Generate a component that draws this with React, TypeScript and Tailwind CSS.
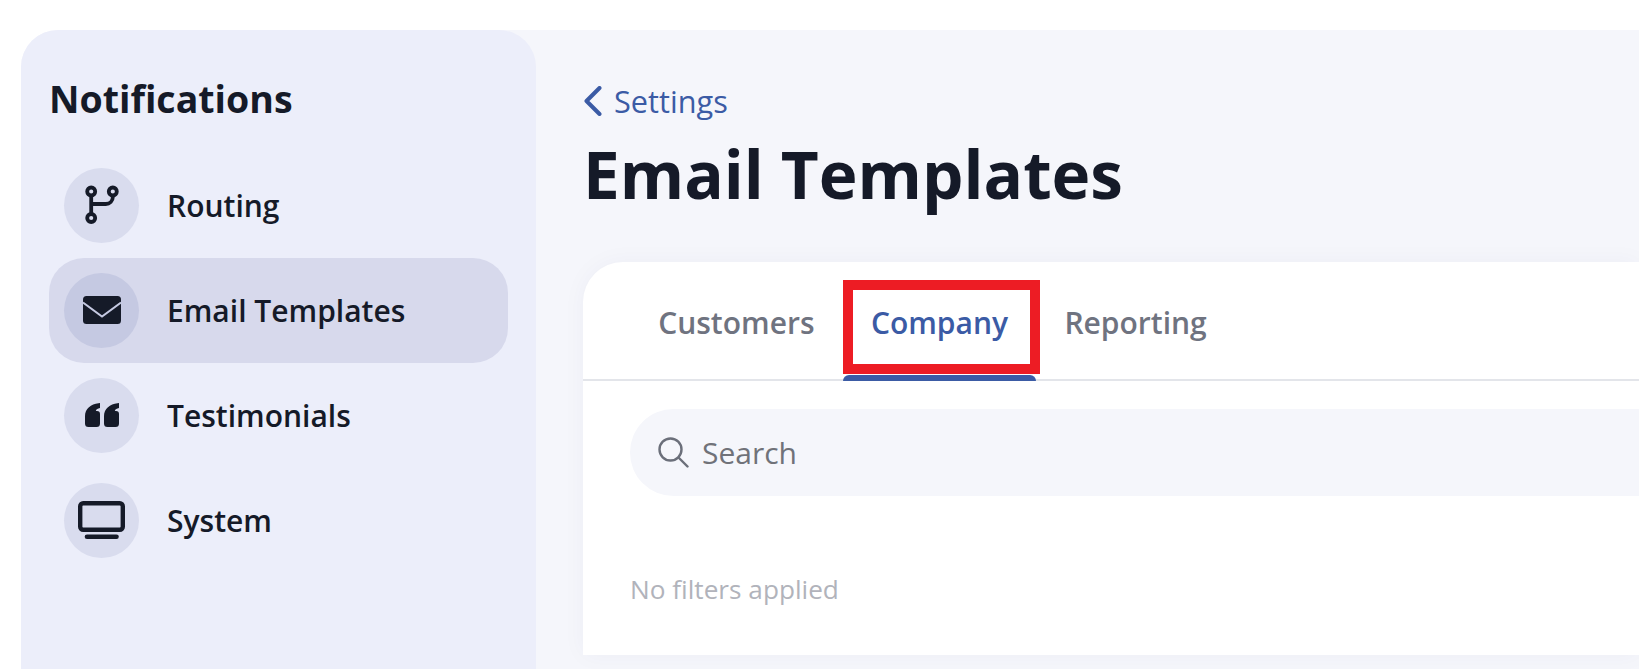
function RoutingIcon() {
  return (
    <svg className="-translate-y-px" width="40" height="40" viewBox="0 0 40 40" fill="none" stroke="#151a28" strokeWidth="3.8">
      <circle cx="9.2" cy="6.5" r="4" />
      <circle cx="30.8" cy="6.5" r="4" />
      <circle cx="9.2" cy="33" r="4" />
      <path d="M9.2 10.5V29" />
      <path d="M30.8 10.5V12c0 4-3 7-7 7H9.2" />
    </svg>
  );
}

function MailIcon() {
  return (
    <svg className="-translate-y-px" width="38" height="28" viewBox="0 0 38 28">
      <rect width="38" height="28" rx="3.5" fill="#151a28" />
      <path d="M0 6.5 19 20.5 38 6.5" fill="none" stroke="#c5c9e2" strokeWidth="2" />
    </svg>
  );
}

function QuoteIcon() {
  const mark =
    'M15 0V5C12.8 5.4 11.3 6.3 10.8 8H12A3 3 0 0 1 15 11V20.5A3.5 3.5 0 0 1 11.5 24H3.5A3.5 3.5 0 0 1 0 20.5V13C0 5.5 6 1 13.5 0.2Z';
  return (
    <svg className="-translate-y-px" width="34" height="24" viewBox="0 0 34 24" fill="#151a28">
      <path d={mark} />
      <path d={mark} transform="translate(19 0)" />
    </svg>
  );
}

function MonitorIcon() {
  return (
    <svg className="-translate-y-px" width="47" height="38" viewBox="0 0 47 38" fill="none" stroke="#151a28">
      <rect x="2.2" y="2.2" width="42.6" height="26.6" rx="3" strokeWidth="4.4" />
      <path d="M9 35.7H38.5" strokeWidth="4.6" strokeLinecap="round" />
    </svg>
  );
}

function SearchIcon() {
  return (
    <svg width="31" height="31" viewBox="0 0 31 31" fill="none" stroke="#6b6f7a" strokeWidth="2.4" strokeLinecap="round">
      <circle cx="12.5" cy="12.5" r="11" />
      <path d="M20.5 20.5 29.5 29.5" />
    </svg>
  );
}

const navItems = [
  { label: 'Routing', icon: <RoutingIcon />, active: false },
  { label: 'Email Templates', icon: <MailIcon />, active: true },
  { label: 'Testimonials', icon: <QuoteIcon />, active: false },
  { label: 'System', icon: <MonitorIcon />, active: false },
];

export default function App() {
  return (
    <div className="h-[669px] overflow-hidden bg-white pt-[30px] pl-[21px] font-['Open_Sans',sans-serif] text-[#151a28]">
      <div className="flex h-full rounded-tl-[37px] bg-[#f5f6fb]">
        {/* Sidebar */}
        <aside className="h-[700px] w-[515px] shrink-0 rounded-[37px] bg-[#eceefa] pt-[44px] pl-[28px] pr-[28px]">
          <h2 className="text-[37.5px] leading-[50px] font-bold">Notifications</h2>
          <nav className="mt-[29px]">
            {navItems.map((item) => (
              <div
                key={item.label}
                className={`flex h-[105px] items-center gap-[28px] rounded-[35px] p-[15px] ${
                  item.active ? 'bg-[#d7d9ec]' : ''
                }`}
              >
                <div
                  className={`flex h-[75px] w-[75px] shrink-0 items-center justify-center rounded-full ${
                    item.active ? 'bg-[#c5c9e2]' : 'bg-[#d9dcee]'
                  }`}
                >
                  {item.icon}
                </div>
                <span className="text-[30px] leading-[40px] font-semibold">{item.label}</span>
              </div>
            ))}
          </nav>
        </aside>

        {/* Main */}
        <main className="min-w-0 flex-1 pl-[47px]">
          <a className="mt-[54px] flex h-[34px] items-center gap-[11px] text-[30.7px] text-[#3b5ba5]">
            <svg width="20" height="30" viewBox="0 0 20 30" fill="none" stroke="#3b5ba5" strokeWidth="4" strokeLinecap="round" strokeLinejoin="round">
              <path d="M16.5 2 3.5 15l13 13" />
            </svg>
            Settings
          </a>
          <h1 className="mt-[11px] text-[65.6px] leading-[90px] font-bold">Email Templates</h1>

          <section className="mt-[43px] h-[393px] rounded-tl-[40px] bg-white shadow-[0_0_24px_rgba(30,40,90,0.04)]">
            <div className="flex h-[119px] border-b-2 border-[#e3e5ea] pl-[47px]">
              <button className="flex h-[117px] items-center justify-center px-[28.2px] pt-[4px] text-[30px] font-semibold text-[#6f7380]">
                Customers
              </button>
              <button className="relative flex h-[119px] items-center justify-center px-[28.2px] pb-[2px] pt-[4px] text-[30px] font-semibold text-[#3b5ba5]">
                Company
                <span className="absolute right-0 bottom-0 left-0 h-[6px] rounded-t-[6px] bg-[#3b5ba5]" />
                <span className="absolute top-[18px] -right-[4px] bottom-[7px] left-0 border-[10px] border-[#ed1c24]" />
              </button>
              <button className="flex h-[117px] items-center justify-center px-[28.2px] pt-[4px] text-[30px] font-semibold text-[#6f7380]">
                Reporting
              </button>
            </div>

            <div className="pl-[47px]">
              <div className="mt-[28px] flex h-[87px] items-center gap-[13px] rounded-l-full bg-[#f5f6fb] pl-[28px]">
                <SearchIcon />
                <input
                  placeholder="Search"
                  className="w-[400px] bg-transparent text-[30px] outline-none placeholder:text-[#707279]"
                />
              </div>
              <p className="mt-[74px] text-[26.2px] leading-[38px] text-[#b1b3bb]">No filters applied</p>
            </div>
          </section>
        </main>
      </div>
    </div>
  );
}
